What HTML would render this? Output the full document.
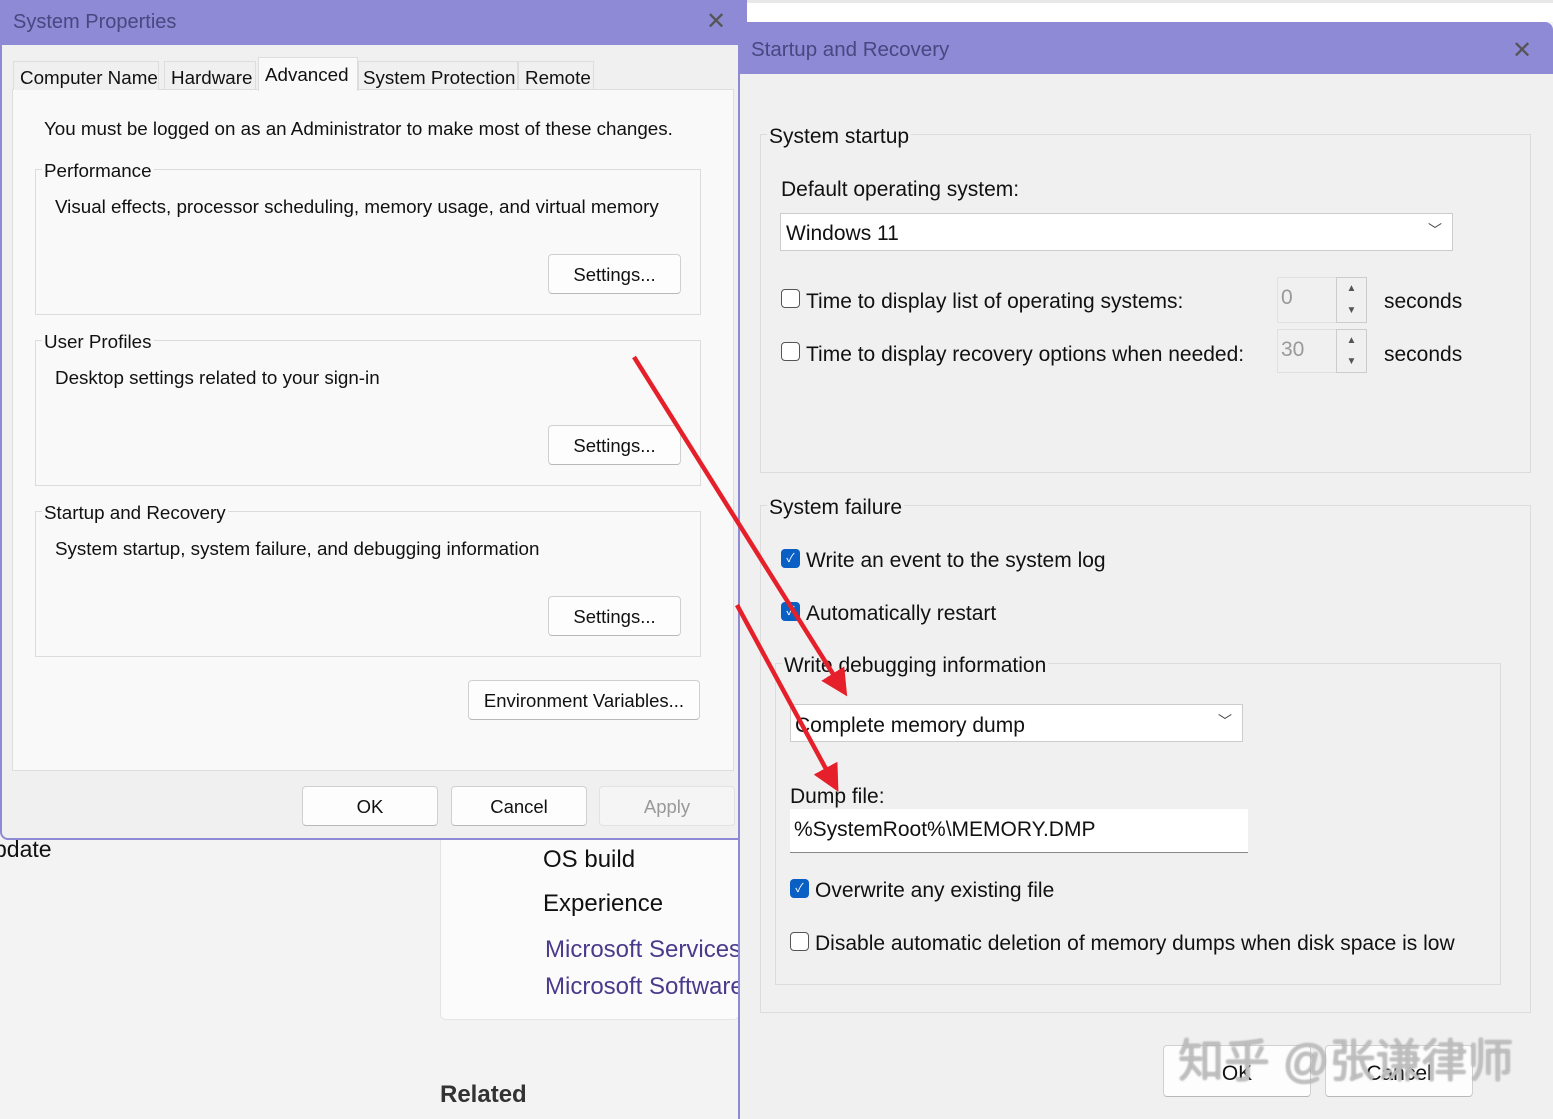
<!DOCTYPE html>
<html><head><meta charset="utf-8"><style>
*{box-sizing:border-box;margin:0;padding:0}
body{width:1553px;height:1119px;position:relative;overflow:hidden;background:#f3f3f3;font-family:"Liberation Sans","Noto Sans CJK SC",sans-serif;color:#111}
.a{position:absolute;white-space:nowrap}
.btn{position:absolute;background:#fdfdfd;border:1px solid #d0d0d0;border-bottom-color:#b8b8b8;border-radius:4px;font-size:18.5px;text-align:center}
.grp{position:absolute;border:1px solid #dcdcdc}
.cb{position:absolute;width:19px;height:19px;border:1.5px solid #555;border-radius:4px;background:#fff}
.cbc{position:absolute;width:19px;height:19px;border-radius:4px;background:#0a5fc4;color:#fff;font-size:12px;text-align:center;line-height:19px}
.L{font-size:18.8px}
.R{font-size:21px}
</style></head><body>
<div class="a" style="left:747px;top:0;width:806px;height:22px;background:#fff;border-top:3px solid #e8e8e8"></div>
<div class="a" style="left:440px;top:830px;width:300px;height:190px;background:#fbfbfb;border:1px solid #e5e5e5;border-radius:6px"></div>
<div class="a" style="left:-6px;top:836px;font-size:23px">pdate</div>
<div class="a" style="left:543px;top:846px;font-size:24px">OS build</div>
<div class="a" style="left:543px;top:890px;font-size:24px">Experience</div>
<div class="a" style="left:545px;top:936px;font-size:24px;color:#4b3a8c">Microsoft Services</div>
<div class="a" style="left:545px;top:973px;font-size:24px;color:#4b3a8c">Microsoft Software</div>
<div class="a" style="left:440px;top:1081px;font-size:24px;font-weight:bold;color:#333">Related</div>

<div class="a" style="left:0;top:0;width:747px;height:840px;background:#f0f0f0;border:2px solid #8e8ad6;border-top:none;border-radius:0 0 8px 8px"></div>
<div class="a" style="left:0;top:0;width:747px;height:45px;background:#8e8ad6"></div>
<div class="a" style="left:13px;top:11px;font-size:20px;color:#4a4680">System Properties</div>
<div class="a" style="left:706px;top:7px;font-size:24px;color:#555">✕</div>
<div class="a" style="left:12px;top:89px;width:722px;height:682px;background:#f9f9f9;border:1px solid #dedede"></div>
<div class="a L" style="left:13px;top:61px;width:146px;height:29px;border:1px solid #ddd;border-bottom:none;padding:5px 0 0 6px;background:#f0f0f0">Computer Name</div>
<div class="a L" style="left:164px;top:61px;width:92px;height:29px;border:1px solid #ddd;border-bottom:none;padding:5px 0 0 6px">Hardware</div>
<div class="a L" style="left:258px;top:57px;width:100px;height:34px;border:1px solid #ddd;border-bottom:none;padding:6px 0 0 6px;background:#f9f9f9">Advanced</div>
<div class="a L" style="left:358px;top:61px;width:160px;height:29px;border:1px solid #ddd;border-bottom:none;padding:5px 0 0 4px">System Protection</div>
<div class="a L" style="left:518px;top:61px;width:76px;height:29px;border:1px solid #ddd;border-bottom:none;padding:5px 0 0 6px">Remote</div>
<div class="a L" style="left:44px;top:118px">You must be logged on as an Administrator to make most of these changes.</div>

<div class="grp" style="left:35px;top:169px;width:666px;height:146px"></div>
<div class="a L" style="left:42px;top:160px;background:#f9f9f9;padding:0 2px">Performance</div>
<div class="a L" style="left:55px;top:196px">Visual effects, processor scheduling, memory usage, and virtual memory</div>
<div class="btn" style="left:548px;top:254px;width:133px;height:40px;line-height:40px">Settings...</div>

<div class="grp" style="left:35px;top:340px;width:666px;height:146px"></div>
<div class="a L" style="left:42px;top:331px;background:#f9f9f9;padding:0 2px">User Profiles</div>
<div class="a L" style="left:55px;top:367px">Desktop settings related to your sign-in</div>
<div class="btn" style="left:548px;top:425px;width:133px;height:40px;line-height:40px">Settings...</div>

<div class="grp" style="left:35px;top:511px;width:666px;height:146px"></div>
<div class="a L" style="left:42px;top:502px;background:#f9f9f9;padding:0 2px">Startup and Recovery</div>
<div class="a L" style="left:55px;top:538px">System startup, system failure, and debugging information</div>
<div class="btn" style="left:548px;top:596px;width:133px;height:40px;line-height:40px">Settings...</div>

<div class="btn" style="left:468px;top:680px;width:232px;height:40px;line-height:40px">Environment Variables...</div>
<div class="btn" style="left:302px;top:786px;width:136px;height:40px;line-height:40px">OK</div>
<div class="btn" style="left:451px;top:786px;width:136px;height:40px;line-height:40px">Cancel</div>
<div class="btn" style="left:599px;top:786px;width:136px;height:40px;line-height:40px;color:#999;background:#f5f5f5;border-color:#e2e2e2">Apply</div>

<div class="a" style="left:738px;top:22px;width:815px;height:1097px;background:#f0f0f0;border-left:2px solid #8e8ad6;border-radius:8px 8px 0 0"></div>
<div class="a" style="left:738px;top:22px;width:815px;height:52px;background:#8e8ad6;border-radius:8px 8px 0 0"></div>
<div class="a" style="left:751px;top:38px;font-size:20.5px;color:#4a4680">Startup and Recovery</div>
<div class="a" style="left:1512px;top:36px;font-size:24px;color:#555">✕</div>

<div class="grp" style="left:760px;top:134px;width:771px;height:339px"></div>
<div class="a R" style="left:767px;top:125px;background:#f0f0f0;padding:0 2px">System startup</div>
<div class="a R" style="left:781px;top:178px">Default operating system:</div>
<div class="a R" style="left:780px;top:213px;width:673px;height:38px;background:#fff;border:1px solid #ccc;padding:8px 0 0 5px">Windows 11<span style="position:absolute;right:10px;top:6px;font-size:14px;color:#444">﹀</span></div>
<div class="cb" style="left:781px;top:289px"></div>
<div class="a R" style="left:806px;top:290px">Time to display list of operating systems:</div>
<div class="a R" style="left:1277px;top:277px;width:90px;height:46px;border:1px solid #e0e0e0;background:#f0f0f0;color:#999;padding:8px 0 0 3px">0</div>
<div class="a" style="left:1336px;top:277px;width:31px;height:46px;border:1px solid #ccc;font-size:10px;color:#555;text-align:center;line-height:22px">▲<br>▼</div>
<div class="a R" style="left:1384px;top:290px">seconds</div>
<div class="cb" style="left:781px;top:342px"></div>
<div class="a R" style="left:806px;top:343px">Time to display recovery options when needed:</div>
<div class="a R" style="left:1277px;top:329px;width:90px;height:44px;border:1px solid #e0e0e0;background:#f0f0f0;color:#999;padding:8px 0 0 3px">30</div>
<div class="a" style="left:1336px;top:329px;width:31px;height:44px;border:1px solid #ccc;font-size:10px;color:#555;text-align:center;line-height:21px">▲<br>▼</div>
<div class="a R" style="left:1384px;top:343px">seconds</div>

<div class="grp" style="left:760px;top:505px;width:771px;height:508px"></div>
<div class="a R" style="left:767px;top:496px;background:#f0f0f0;padding:0 2px">System failure</div>
<div class="cbc" style="left:781px;top:549px">✓</div>
<div class="a R" style="left:806px;top:549px">Write an event to the system log</div>
<div class="cbc" style="left:781px;top:602px">✓</div>
<div class="a R" style="left:806px;top:602px">Automatically restart</div>
<div class="grp" style="left:775px;top:663px;width:726px;height:322px"></div>
<div class="a R" style="left:782px;top:654px;background:#f0f0f0;padding:0 2px">Write debugging information</div>
<div class="a R" style="left:790px;top:704px;width:453px;height:38px;background:#fff;border:1px solid #ccc;padding:9px 0 0 4px">Complete memory dump<span style="position:absolute;right:10px;top:6px;font-size:14px;color:#444">﹀</span></div>
<div class="a R" style="left:790px;top:785px">Dump file:</div>
<div class="a R" style="left:790px;top:809px;width:458px;height:44px;background:#fff;border-bottom:1px solid #888;padding:9px 0 0 4px">%SystemRoot%\MEMORY.DMP</div>
<div class="cbc" style="left:790px;top:879px">✓</div>
<div class="a R" style="left:815px;top:879px">Overwrite any existing file</div>
<div class="cb" style="left:790px;top:932px"></div>
<div class="a R" style="left:815px;top:932px">Disable automatic deletion of memory dumps when disk space is low</div>

<div class="btn" style="left:1163px;top:1045px;width:148px;height:52px;line-height:56px;font-size:21px">OK</div>
<div class="btn" style="left:1325px;top:1045px;width:148px;height:52px;line-height:56px;font-size:21px">Cancel</div>
<div class="a" style="left:1178px;top:1025px;font-size:46px;color:rgba(200,200,200,.8);text-shadow:0 0 2px #888">知乎 @张谦律师</div>

<svg class="a" style="left:0;top:0" width="1553" height="1119">
<defs><marker id="m" markerWidth="6" markerHeight="6" refX="3" refY="3" orient="auto"><path d="M0,0L6,3L0,6z" fill="#e5202a"/></marker></defs>
<line x1="634" y1="357" x2="840" y2="685" stroke="#e5202a" stroke-width="4.5" marker-end="url(#m)"/>
<line x1="737" y1="605" x2="832" y2="780" stroke="#e5202a" stroke-width="4.5" marker-end="url(#m)"/>
</svg>
</body></html>
